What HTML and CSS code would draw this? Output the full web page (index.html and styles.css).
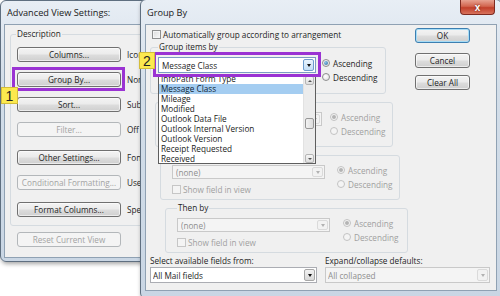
FILE: index.html
```html
<!DOCTYPE html>
<html>
<head>
<meta charset="utf-8">
<title>Group By</title>
<link rel="stylesheet" href="styles.css">
</head>
<body>
<div class="desk">
  <section class="win adv">
    <div class="title">Advanced View Settings:</div>
    <div class="client aclient">
      <fieldset class="desc">
        <legend>Description</legend>
        <div class="brow first"><button class="btn wide">Columns...</button><span class="info">Icon, Attachment, From, Subject, Received, Size</span></div>
        <div class="brow"><button class="btn wide">Group By...</button><span class="info">None</span></div>
        <div class="brow"><button class="btn wide">Sort...</button><span class="info">Subject (ascending)</span></div>
        <div class="brow"><button class="btn wide dis">Filter...</button><span class="info">Off</span></div>
        <div class="brow more"><button class="btn wide">Other Settings...</button><span class="info">Fonts and other Table View settings</span></div>
        <div class="brow"><button class="btn wide dis">Conditional Formatting...</button><span class="info">User defined fonts on each message</span></div>
        <div class="brow fmt"><button class="btn wide">Format Columns...</button><span class="info">Specify the display formats for each field</span></div>
      </fieldset>
      <div class="brow reset"><button class="btn wide dis">Reset Current View</button></div>
    </div>
  </section>

  <section class="win grp">
    <div class="title gtitle"><span>Group By</span><span class="close">x</span></div>
    <div class="client gclient">
      <div class="gtop">
        <div class="gmain">
          <div class="chkrow auto"><span class="chk"></span><span>Automatically group according to arrangement</span></div>

          <fieldset class="gbox l1">
            <legend>Group items by</legend>
            <div class="combo focus"><span class="val">Message Class</span><span class="arr"></span></div>
            <div class="chkrow sub"><span class="chk"></span><span>Show field in view</span></div>
            <div class="rads">
              <div class="rad on"><span class="dot"></span><span>Ascending</span></div>
              <div class="rad"><span class="dot"></span><span>Descending</span></div>
            </div>
          </fieldset>

          <fieldset class="gbox l2 off">
            <legend>Then by</legend>
            <div class="combo dcombo"><span class="val">(none)</span><span class="arr"></span></div>
            <div class="chkrow sub"><span class="chk"></span><span>Show field in view</span></div>
            <div class="rads">
              <div class="rad on"><span class="dot"></span><span>Ascending</span></div>
              <div class="rad"><span class="dot"></span><span>Descending</span></div>
            </div>
          </fieldset>

          <fieldset class="gbox l3 off">
            <legend>Then by</legend>
            <div class="combo dcombo"><span class="val">(none)</span><span class="arr"></span></div>
            <div class="chkrow sub"><span class="chk"></span><span>Show field in view</span></div>
            <div class="rads">
              <div class="rad on"><span class="dot"></span><span>Ascending</span></div>
              <div class="rad"><span class="dot"></span><span>Descending</span></div>
            </div>
          </fieldset>

          <fieldset class="gbox l4 off">
            <legend>Then by</legend>
            <div class="combo dcombo"><span class="val">(none)</span><span class="arr"></span></div>
            <div class="chkrow sub"><span class="chk"></span><span>Show field in view</span></div>
            <div class="rads">
              <div class="rad on"><span class="dot"></span><span>Ascending</span></div>
              <div class="rad"><span class="dot"></span><span>Descending</span></div>
            </div>
          </fieldset>
        </div>
        <div class="side">
          <button class="btn sbtn ok">OK</button>
          <button class="btn sbtn cancel">Cancel</button>
          <button class="btn sbtn clear">Clear All</button>
        </div>
      </div>
      <div class="gbot">
        <div class="blab">Select available fields from:</div>
        <div class="blab">Expand/collapse defaults:</div>
        <div class="combo bcombo"><span class="val">All Mail fields</span><span class="arr"></span></div>
        <div class="combo bcombo dcombo"><span class="val">All collapsed</span><span class="arr"></span></div>
      </div>
    </div>

    <div class="drop">
      <div class="items">
        <div class="it">InfoPath Form Type</div>
        <div class="it sel">Message Class</div>
        <div class="it">Mileage</div>
        <div class="it">Modified</div>
        <div class="it">Outlook Data File</div>
        <div class="it">Outlook Internal Version</div>
        <div class="it">Outlook Version</div>
        <div class="it">Receipt Requested</div>
        <div class="it">Received</div>
      </div>
      <div class="sb">
        <span class="sbb up"></span>
        <span class="track"><span class="thumb"></span></span>
        <span class="sbb down"></span>
      </div>
    </div>
  </section>

  <div class="hl hl1"></div>
  <div class="badge b1">1</div>
  <div class="hl hl2"></div>
  <div class="badge b2">2</div>
</div>
</body>
</html>
```

FILE: styles.css
```css
* { box-sizing: border-box; }
html, body { margin: 0; padding: 0; }
body {
  width: 500px; height: 296px; overflow: hidden; background: #fff;
  font-family: "Open Sans", "Noto Sans", sans-serif; font-size: 8.2px; color: #1e1e1e;
}
.desk { position: relative; width: 500px; height: 296px; overflow: hidden; }

/* window frames */
.win {
  position: absolute; display: flex; flex-direction: column;
  border: 1px solid #5f6f80; border-radius: 6px;
  background: linear-gradient(#e8eef5, #d3dee9 30%, #c9d6e4);
  box-shadow: 1px 2px 4px rgba(0,0,0,.35);
}
.adv { left: 0; top: 0; width: 165px; height: 262px; padding: 0 3px 3px; }
.grp { left: 140px; top: -1px; width: 362px; height: 300px; padding: 0 4px 7px; }
.title {
  height: 23px; flex: none; display: flex; align-items: center; padding-left: 3px;
  font-size: 9.2px; color: #1a1a1a;
}
.gtitle { height: 24px; padding-left: 2px; }
.close {
  align-self: flex-start; margin-left: auto; margin-right: 2px;
  width: 35px; height: 15px; border: 1px solid #7d2a20; border-top: none;
  border-radius: 0 0 4px 4px;
  background: linear-gradient(#e7a291, #d2654f 45%, #c13f2a 55%, #d8735c);
  color: #fff; font-family: "Liberation Sans", sans-serif; font-weight: bold; font-size: 10px;
  display: flex; align-items: center; justify-content: center; text-shadow: 0 0 2px #5a1208;
}
.client { flex: 1; background: #f0f0f0; border: 1px solid #8fa1b3; overflow: hidden; }

/* buttons */
.btn {
  font: inherit; color: #1e1e1e; height: 15px; padding: 0; flex: none;
  border: 1px solid #707070; border-radius: 3px;
  background: linear-gradient(#f3f3f3, #ebebeb 48%, #dddddd 52%, #cfcfcf);
  box-shadow: inset 0 0 0 1px rgba(255,255,255,.6);
}
.btn.dis { border-color: #b3b7ba; background: #f4f4f4; color: #a3a3a3; box-shadow: none; }
.wide { width: 104px; }

/* advanced view settings */
.desc {
  margin: 4px 0 0 5px; padding: 8px 0 8px 6px; width: 220px;
  border: 1px solid #d5dbe0; border-radius: 3px;
}
.desc legend { padding: 0 1px; margin-left: -1px; line-height: 10px; }
.brow { display: flex; align-items: center; gap: 6px; margin-top: 10px; white-space: nowrap; }
.brow.first { margin-top: 0; }
.brow.more { margin-top: 13px; }
.brow.fmt { margin-top: 12px; }
.brow.reset { margin: 6px 0 0 12px; }
.info { color: #1e1e1e; }

/* group by client */
.gtop { display: grid; grid-template-columns: 269px 55px; }
.chkrow { display: flex; align-items: center; gap: 2px; height: 10px; white-space: nowrap; }
.chkrow.auto { margin: 4px 0 0 6px; }
.chk {
  width: 9px; height: 9px; border: 1px solid #8e8f8f;
  background: linear-gradient(135deg, #dcdcdc, #f8f8f8); box-shadow: inset 0 0 0 1px #f4f4f4;
}
.gbox {
  margin: 3px 0 0 4px; padding: 5px 0 5px 7px; min-width: 0;
  border: 1px solid #d5dbe0; border-radius: 3px;
  display: grid; grid-template-columns: 158px auto; column-gap: 6px;
}
.gbox legend { padding: 0 1px; line-height: 10px; }
.gbox.l2 { margin-left: 9px; width: 238px; padding-left: 9px; grid-template-columns: 157px auto; column-gap: 8px; }
.gbox.l3 { margin-left: 14px; width: 240px; padding-left: 11px; grid-template-columns: 153px auto; column-gap: 12px; }
.gbox.l4 { margin-left: 19px; width: 243px; padding-left: 11px; grid-template-columns: 153px auto; column-gap: 13px; }
.gbox.l1 { width: 236px; }
.gbox .sub { margin-top: 5px; grid-column: 1; }
.rads { grid-column: 2; grid-row: 1 / span 2; margin-top: -2px; }
.gbox.l1 .rads { margin-top: -1px; }
.rad { display: flex; align-items: center; gap: 3px; height: 14px; white-space: nowrap; }
.dot {
  width: 8px; height: 8px; border-radius: 50%; border: 1px solid #8e8f8f;
  background: radial-gradient(circle at 40% 40%, #fff, #dcdcdc);
  display: flex; align-items: center; justify-content: center;
}
.rad.on .dot::after { content: ""; width: 4px; height: 4px; border-radius: 50%; background: radial-gradient(circle at 35% 35%, #8fc3e8, #2b6a9c); }
.off .rad, .off .sub { color: #a0a0a0; }
.off .dot { border-color: #c3c3c3; background: #f4f4f4; }
.off .rad.on .dot::after { background: #b4b4b4; }
.off .chk { border-color: #c6c6c6; background: #f4f4f4; box-shadow: none; }

/* combos */
.combo {
  height: 14px; display: flex; align-items: center; padding: 1px 1px 1px 3px;
  background: #fff; border: 1px solid #abadb3; white-space: nowrap;
}
.combo .val { flex: 1; overflow: hidden; }
.combo .arr {
  width: 11px; align-self: stretch; display: flex; align-items: center; justify-content: center;
  border: 1px solid #a7a7a7; border-radius: 2px;
  background: linear-gradient(#f2f2f2, #d8d8d8);
}
.combo .arr::after {
  content: ""; border-left: 2.5px solid transparent; border-right: 2.5px solid transparent;
  border-top: 3px solid #111;
}
.combo.focus { height: 16px; border-color: #7a9cc4; }
.combo.focus .arr { border-color: #6e9ccd; background: linear-gradient(#e9f4fd, #c4dff6); }
.dcombo { background: #f4f4f4; border-color: #c9c9c9; color: #8e8e8e; }
.dcombo .arr { border-color: #dadada; background: #f2f2f2; }
.dcombo .arr::after { border-top-color: #b2b2b2; }

.side { display: flex; flex-direction: column; }
.sbtn { width: 55px; }
.ok { margin-top: 3px; border-color: #3c7fb1; box-shadow: inset 0 0 0 1px #a6dcf6; }
.cancel { margin-top: 10px; }
.clear { margin-top: 7px; }

.gbot {
  display: grid; grid-template-columns: 167px 165px; column-gap: 8px; row-gap: 1px;
  margin: 3px 0 0 4px;
}
.blab { line-height: 10px; white-space: nowrap; }
.bcombo { height: 16px; padding-left: 2px; }

/* dropdown list (overlay) */
.drop {
  position: absolute; left: 17px; top: 75px; width: 158px; height: 89px; z-index: 2;
  background: #fff; border: 1px solid #5e5e5e; display: flex; overflow: hidden;
}
.items { flex: 1; margin-top: -2px; overflow: hidden; }
.it { height: 10px; line-height: 10px; padding-left: 2px; white-space: nowrap; color: #1a1a1a; }
.it.sel { background: #a4cdf1; color: #0f1f33; }
.sb { width: 12px; display: flex; flex-direction: column; background: #ececec; border-left: 1px solid #e2e2e2; }
.sbb {
  height: 9px; flex: none; margin: 0 1px; border: 1px solid #b5b5b5; border-radius: 2px;
  background: linear-gradient(#f6f6f6, #dedede); display: flex; align-items: center; justify-content: center;
}
.sbb.up::after { content: ""; border-left: 2px solid transparent; border-right: 2px solid transparent; border-bottom: 2px solid #555; }
.sbb.down::after { content: ""; border-left: 2px solid transparent; border-right: 2px solid transparent; border-top: 2px solid #555; }
.track { flex: 1; display: flex; flex-direction: column; }
.thumb {
  margin: 33px 1px 0; height: 11px; border: 1px solid #979797; border-radius: 2px;
  background: linear-gradient(90deg, #f3f3f3, #dcdcdc);
}

/* annotations */
.hl { position: absolute; border: 3px solid #9a33d3; z-index: 5; }
.hl1 { left: 12px; top: 67px; width: 113px; height: 24px; }
.hl2 { left: 153px; top: 52px; width: 168px; height: 25px; }
.badge {
  position: absolute; z-index: 6; display: flex; align-items: center; justify-content: center;
  background: #fce94e; border: 1px solid #d4bd3a;
  font-family: "Liberation Sans", sans-serif; font-size: 14px; color: #222;
}
.b1 { left: 1px; top: 87px; width: 17px; height: 17px; }
.b2 { left: 139px; top: 52px; width: 16px; height: 17px; }
```
